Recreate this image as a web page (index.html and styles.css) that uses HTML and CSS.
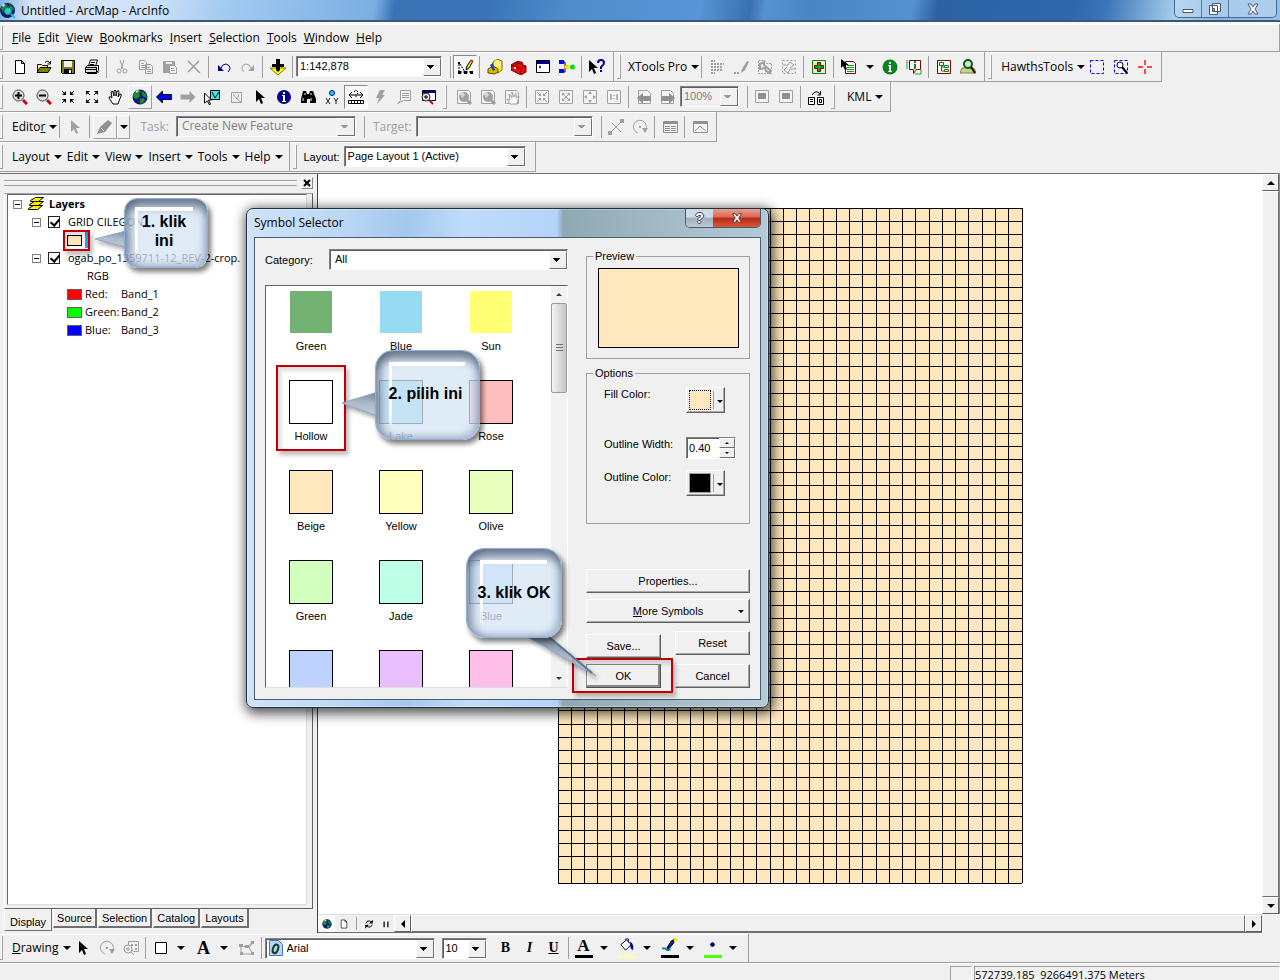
FILE: index.html
```html
<!DOCTYPE html>
<html lang="en">
<head>
<meta charset="utf-8">
<title>Untitled - ArcMap - ArcInfo</title>
<link rel="stylesheet" href="styles.css">
</head>
<body>
<svg class="defs" aria-hidden="true">
  <symbol id="globe" viewBox="0 0 16 16"><circle cx="8" cy="8" r="7.500" fill="#0a1a78"/><path d="M3 3l4-2 2 2-2 2 1 2-3 3-3-1-1-3zM10 2l4 3 1 4-3-1-2-2zM8 10l4-1 1 3-3 3-2-1z" fill="#1b8a2c"/><path d="M4 2l2-1 1 1-3 2z" fill="#d8ecd8"/></symbol>
  <symbol id="app" viewBox="0 0 16 16"><circle cx="7.500" cy="7.500" r="7.500" fill="#101c60"/><path d="M1 5l4-4 3 1-2 3-2 1-1 4zM9 1l4 3 1 4-4-3z" fill="#159030"/><path d="M2 2l2-1 1 1-2 2z" fill="#fff"/><circle cx="8" cy="8" r="3.500" fill="#28d8a0" stroke="#2a7ad8"/><path d="M11 11l4 4" stroke="#2ab8e8" stroke-width="2"/></symbol>
  <symbol id="new" viewBox="0 0 16 16"><path d="M3.500 1.500h6l3 3v10h-9z" fill="#fff" stroke="#000"/><path d="M9.500 1.500v3h3" fill="none" stroke="#000"/></symbol>
  <symbol id="open" viewBox="0 0 16 16"><path d="M1.500 13V5.500h4l1 1h5v3" fill="#ffffa0" stroke="#000"/><path d="M1 13.500l3-5h11l-3 5z" fill="#808000" stroke="#000"/><path d="M9 3.500q3-3 5 1M14.500 2v3h-3" fill="none" stroke="#000"/></symbol>
  <symbol id="save" viewBox="0 0 16 16"><path d="M1.500 1.500h13v13h-12l-1-1z" fill="#808000" stroke="#000"/><path d="M4 2h8v6H4z" fill="#f0f0f0"/><path d="M4 10h8v4H4z" fill="#000"/><path d="M9 11h2v3H9z" fill="#fff"/></symbol>
  <symbol id="print" viewBox="0 0 16 16"><path d="M4.500 7l2-6h7l-2 6" fill="#fff" stroke="#000"/><path d="M7 3.500h4M6 5.500h4" stroke="#000"/><path d="M1.500 8.500l2-2h11v5l-2 2h-11z" fill="#ddd" stroke="#000"/><path d="M1.500 8.500h11v5M2 10.500h10M3 14.500h10l2-2" fill="none" stroke="#000"/></symbol>
  <symbol id="cut" viewBox="0 0 16 16"><path d="M6 1l3 9M10 1L7 10" stroke="#a0a0a0" fill="none"/><circle cx="5" cy="12" r="2" fill="none" stroke="#a0a0a0"/><circle cx="11" cy="12" r="2" fill="none" stroke="#a0a0a0"/></symbol>
  <symbol id="copy" viewBox="0 0 16 16"><path d="M1.500 1.500h5l2 2v7h-7zM7.500 5.500h5l2 2v7h-7z" fill="#f0f0f0" stroke="#a0a0a0"/><path d="M3 4.500h3M3 6.500h4M3 8.500h4M9 8.500h3M9 10.500h4M9 12.500h4" stroke="#a0a0a0"/></symbol>
  <symbol id="paste" viewBox="0 0 16 16"><path d="M1 2h12v12H1z" fill="#a0a0a0"/><path d="M4 3h6v2H4zM7 7h8v8H7z" fill="#f0f0f0"/><path d="M7.500 6.500h5l2 2v6h-7zM9 9.500h3M9 11.500h4" fill="none" stroke="#a0a0a0"/></symbol>
  <symbol id="del" viewBox="0 0 16 16"><path d="M2 2l12 12M13 2L2 13" stroke="#a0a0a0" stroke-width="1.500"/></symbol>
  <symbol id="undo" viewBox="0 0 16 16"><path d="M5 9q1-4 5-4 4 1 4 4 0 2-2 4" fill="none" stroke="#000080"/><path d="M2 6v6h6z" fill="#000080"/></symbol>
  <symbol id="redo" viewBox="0 0 16 16"><path d="M11 9q-1-4-5-4-4 1-4 4 0 2 2 4" fill="none" stroke="#a0a0a0"/><path d="M14 6v6H8z" fill="#a0a0a0"/></symbol>
  <symbol id="adddata" viewBox="0 0 16 16"><path d="M0 9h16l-8 7z" fill="#ffff00" stroke="#807800"/><path d="M6 0h4v5h4v3h-4v3l-2 2-2-2V8H2V5h4z" fill="#000"/></symbol>
  <symbol id="edit" viewBox="0 0 16 16"><path d="M2 5v8h12M3 5l5 8" fill="none" stroke="#000" stroke-dasharray="2 1"/><path d="M1 12h3v3H1zM7 12h3v3H7zM13 12h3v3h-3zM1 3h2v2H1z" fill="#000"/><path d="M9 11l1-4 4-6 2 1-4 7z" fill="#ffe800" stroke="#000"/><path d="M13 1h3v3z" fill="#e02020"/></symbol>
  <symbol id="catalog" viewBox="0 0 16 16"><path d="M6 3l4-3 5 2v9l-4 3-5-3z" fill="#ffe94a" stroke="#807000"/><path d="M8 2h4M8 4h6M8 6h6" stroke="#fffbc0"/><path d="M1 10l5-3 5 3v3l-3 2-7-1z" fill="#d8b800" stroke="#605000"/><path d="M3 6l3-2 2 7-2 1z" fill="#2040b0"/></symbol>
  <symbol id="toolbox" viewBox="0 0 16 16"><path d="M0 6l5-3 10 4v6l-5 3L0 11z" fill="#e80c0c" stroke="#700"/><path d="M0 6l10 4v6M10 10l5-3" fill="none" stroke="#700"/><path d="M5 6q0-5 6-2v3" fill="none" stroke="#a00000" stroke-width="2"/><path d="M3 8h2v2H3z" fill="#fff"/></symbol>
  <symbol id="cmd" viewBox="0 0 16 16"><path d="M1.500 1.500h13v12h-13z" fill="#fff" stroke="#000"/><path d="M2 2h12v3H2z" fill="#000090"/><path d="M4 7l2 1-2 1" fill="none" stroke="#000"/></symbol>
  <symbol id="model" viewBox="0 0 16 16"><path d="M3 3h3v5h3M3 13h3V8M11 8h3" fill="none" stroke="#000"/><path d="M0 1h5v4H0zM0 10h5v4H0z" fill="#0000ff"/><path d="M5 8l3-3 3 3-3 3z" fill="#ffe000"/><circle cx="13.500" cy="8" r="2.500" fill="#00e020"/></symbol>
  <symbol id="help" viewBox="0 0 16 16"><path d="M0 1v12l3-3 2 5 2-1-2-5h4z" fill="#000"/><path d="M9 4q0-3 3-3t3 3q0 2-3 4v2" fill="none" stroke="#000090" stroke-width="2"/><path d="M11 11h2v2h-2z" fill="#000090"/></symbol>
  <symbol id="dots" viewBox="0 0 16 16"><path d="M2 2h4M2 5h13M2 8h11M2 11h11M2 14h4" stroke="#a0a0a0" stroke-width="2" stroke-dasharray="2 1"/></symbol>
  <symbol id="xpen" viewBox="0 0 16 16"><path d="M1 13h2v2H1zM4 13h2v2H4z" fill="#a0a0a0"/><path d="M8 14l1-4 5-8 2 1-4 8z" fill="#a0a0a0"/></symbol>
  <symbol id="xa" viewBox="0 0 16 16"><path d="M1.500 1.500h6l2 3h5v10h-13z" fill="none" stroke="#a0a0a0" stroke-dasharray="2 1"/><path d="M3 5l4-2v3l6 5v3l-4-2-1-3-5 1z" fill="none" stroke="#a0a0a0" stroke-width="2"/></symbol>
  <symbol id="xb" viewBox="0 0 16 16"><path d="M1.500 1.500h13v13h-13z" fill="none" stroke="#a0a0a0" stroke-dasharray="2 2"/><path d="M2 6h5l2-3 4 3-4 3M14 10H9l-2 4-4-3 3-3" fill="none" stroke="#a0a0a0"/></symbol>
  <symbol id="plus" viewBox="0 0 16 16"><path d="M1.500 1.500h13v13h-13z" fill="#dff3d0" stroke="#108010"/><path d="M6.500 3.500h3v3h3v3h-3v3h-3v-3h-3v-3h3z" fill="#18a018" stroke="#800000"/></symbol>
  <symbol id="report" viewBox="0 0 16 16"><path d="M4.500 2.500h8l2 2v10h-10z" fill="#fff" stroke="#800000"/><path d="M6 6.500h7M6 8.500h7M6 10.500h7M6 12.500h7" stroke="#10a010"/><path d="M0 0v9l2-2 2 4 2-1-2-4h4z" fill="#000"/></symbol>
  <symbol id="ginfo" viewBox="0 0 16 16"><circle cx="8" cy="8" r="7.500" fill="#0b8420"/><path d="M7 3h2v2H7zM6 6h3v6h1v1H6v-1h1V7H6z" fill="#fff"/></symbol>
  <symbol id="gnote" viewBox="0 0 16 16"><path d="M3.500 1.500h11v9h-4l-3 4v-4h-4z" fill="#fff" stroke="#800000"/><path d="M1 1v9M9 15h6v-4" fill="none" stroke="#10b010"/><path d="M8 2h2v2H8zM8 5h2v5H8z" fill="#0b8420"/></symbol>
  <symbol id="tree" viewBox="0 0 16 16"><path d="M1.500 1.500h13v13h-13z" fill="#f4fff0" stroke="#800000"/><path d="M3.500 3.500h4v3h-4zM8.500 6.500h4v2h-4zM8.500 10.500h4v2h-4z" fill="#fff" stroke="#107020"/><path d="M5.500 7v5h3M5.500 8h3" fill="none" stroke="#107020"/></symbol>
  <symbol id="gfind" viewBox="0 0 16 16"><path d="M0 14l2-5h12l2 5z" fill="#b8d890" stroke="#908030"/><circle cx="8" cy="5" r="4" fill="#d0e8d0" stroke="#0a6020" stroke-width="2"/><path d="M11 8l4 6" stroke="#300" stroke-width="2"/></symbol>
  <symbol id="dash" viewBox="0 0 16 16"><path d="M1.500 1.500h13v13h-13z" fill="none" stroke="#0000ff" stroke-dasharray="3 2"/></symbol>
  <symbol id="dashfind" viewBox="0 0 16 16"><path d="M1.500 1.500h13v13h-13z" fill="none" stroke="#0000ff" stroke-dasharray="3 2"/><circle cx="7" cy="6" r="3" fill="#fff" stroke="#000"/><path d="M9 8l5 6" stroke="#000" stroke-width="2"/></symbol>
  <symbol id="cross" viewBox="0 0 16 16"><path d="M8 1v5M8 10v5M1 8h5M10 8h5" stroke="#ff1010" stroke-width="1.500"/></symbol>
  <symbol id="zin" viewBox="0 0 16 16"><circle cx="6.500" cy="6.500" r="5.500" fill="#dcdcdc" stroke="#444"/><path d="M3 6.500h7M6.500 3v7" stroke="#000" stroke-width="2"/><path d="M11 11l4 4" stroke="#b01010" stroke-width="3"/></symbol>
  <symbol id="zout" viewBox="0 0 16 16"><circle cx="6.500" cy="6.500" r="5.500" fill="#dcdcdc" stroke="#444"/><path d="M3 6.500h7" stroke="#000" stroke-width="2"/><path d="M11 11l4 4" stroke="#b01010" stroke-width="3"/></symbol>
  <symbol id="fin" viewBox="0 0 16 16"><path d="M6 2v4H2zM10 2v4h4zM6 14v-4H2zM10 14v-4h4z"/><path d="M2 2l3 3M14 2l-3 3M2 14l3-3M14 14l-3-3" stroke="currentColor"/></symbol>
  <symbol id="fout" viewBox="0 0 16 16"><path d="M2 2h4L2 6zM14 2h-4l4 4zM2 14h4l-4-4zM14 14h-4l4-4z"/><path d="M3 3l3 3M13 3l-3 3M3 13l3-3M13 13l-3-3" stroke="currentColor"/></symbol>
  <symbol id="hand" viewBox="0 0 16 16"><path d="M5 15L1 9q0-2 2-1l1 1-1-6q1-2 2 0l1 4V2q1-2 2 0v5l1-5q2-1 2 1l-1 5 2-3q2 0 1 2l-2 5-1 3z" fill="#fff" stroke="currentColor"/></symbol>
  <symbol id="left" viewBox="0 0 16 16"><path d="M.5 8l6-6v3.500h9v5h-9V14z" fill="#0000f0" stroke="#000"/></symbol>
  <symbol id="right" viewBox="0 0 16 16"><path d="M15.500 8l-6-6v3.500h-9v5h9V14z" fill="#a0a0a0"/></symbol>
  <symbol id="selfeat" viewBox="0 0 16 16"><path d="M6.500 1.500h9v9h-9z" fill="#40e8e8" stroke="#000"/><path d="M8 3l3 6 4-6" fill="none" stroke="#000"/><path d="M.5 4v10l3-2 2 4 1-1-2-4h3z" fill="#fff" stroke="#000"/></symbol>
  <symbol id="clearsel" viewBox="0 0 16 16"><path d="M3.500 3.500h10v10h-10z" fill="none" stroke="#a0a0a0"/><path d="M5 5l4 5q3-3 1-5M9 10l4 3" fill="none" stroke="#a0a0a0"/></symbol>
  <symbol id="ptr" viewBox="0 0 16 16"><path d="M4 1v12l3-3 2 5 2-1-2-5h4z"/></symbol>
  <symbol id="info" viewBox="0 0 16 16"><circle cx="8" cy="8" r="7" fill="#000090"/><path d="M7 3h2v2H7zM6 6h3v6h1v1H6v-1h1V7H6z" fill="#fff"/></symbol>
  <symbol id="find" viewBox="0 0 16 16"><path d="M3 2h3l1 3h2l1-3h3l3 8v4h-6v-4H7v4H1v-4z"/><path d="M3 9v3M11 9v3M5 4v2M11 4v2" stroke="#fff"/></symbol>
  <symbol id="goxy" viewBox="0 0 16 16"><circle cx="8" cy="4" r="2.500" fill="#18d8e8" stroke="#0000c0"/><path d="M2 9l4 6M6 9l-4 6M10 9l2 3 2-3M12 12v3" fill="none" stroke="#222"/></symbol>
  <symbol id="measure" viewBox="0 0 16 16"><path d="M1 6h14M4 3L1 6l3 3M12 3l3 3-3 3" fill="none" stroke="#000"/><path d="M6 3q2-3 4 0 0 2-2 3v2" fill="none" stroke="#000" stroke-dasharray="2 1"/><path d="M.5 11.500h15v3H.5z" fill="#fff" stroke="#000"/><path d="M3.500 12v2M6.500 12v2M9.500 12v2M12.500 12v2" stroke="#000"/></symbol>
  <symbol id="bolt" viewBox="0 0 16 16"><path d="M8 1h5L10 6h3l-8 9 2-6H4z" fill="#a0a0a0"/></symbol>
  <symbol id="note" viewBox="0 0 16 16"><path d="M4.500 1.500h10v10h-7l-6 3 3-3z" fill="none" stroke="#a0a0a0"/><path d="M6 4.500h7M6 6.500h7M6 8.500h7" stroke="#a0a0a0"/></symbol>
  <symbol id="viewer" viewBox="0 0 16 16"><path d="M2.500 1.500h13v10h-13z" fill="#fff" stroke="#000"/><path d="M3 2h12v2H3z" fill="#000090"/><circle cx="6" cy="8" r="4" fill="#e4e4e4" stroke="#222"/><path d="M4 8h4M6 6v4" stroke="#000"/><path d="M9 11l4 4" stroke="#c01010" stroke-width="2"/></symbol>
  <symbol id="pgzoom" viewBox="0 0 16 16"><path d="M1.500 1.500h11l2 2v11h-13z" fill="#f4f4f4" stroke="#a0a0a0"/><circle cx="8" cy="8" r="5" fill="#a0a0a0"/><path d="M4 5l3-2 2 3-3 3z" fill="#d8d8d8"/><path d="M11 11l4 4" stroke="#a0a0a0" stroke-width="3"/></symbol>
  <symbol id="pghand" viewBox="0 0 16 16"><path d="M1.500 1.500h11l2 2v11h-13z" fill="#f4f4f4" stroke="#a0a0a0"/><path d="M6 15l-3-5 3 1-1-6 3 4V3l2 5 2-4v5l3-2-2 8z" fill="#fff" stroke="#a0a0a0"/></symbol>
  <symbol id="pgin" viewBox="0 0 16 16"><path d="M1.500 1.500h13v13h-13z" fill="#f4f4f4" stroke="#a0a0a0"/><path d="M7 4v3H4zM9 4v3h3zM7 12V9H4zM9 12V9h3z" fill="#a0a0a0"/><path d="M3 3l3 3M13 3l-3 3M3 13l3-3M13 13l-3-3" stroke="#a0a0a0"/></symbol>
  <symbol id="pgout" viewBox="0 0 16 16"><path d="M1.500 1.500h13v13h-13z" fill="#f4f4f4" stroke="#a0a0a0"/><path d="M4 4h3L4 7zM12 4H9l3 3zM4 12h3L4 9zM12 12H9l3-3z" fill="#a0a0a0"/><path d="M5 5l6 6M11 5l-6 6" stroke="#a0a0a0"/></symbol>
  <symbol id="pgfull" viewBox="0 0 16 16"><path d="M1.500 1.500h13v13h-13z" fill="#f4f4f4" stroke="#a0a0a0"/><path d="M8 2l2 3H6zM8 14l2-3H6zM2 8l3-2v4zM14 8l-3-2v4z" fill="#a0a0a0"/></symbol>
  <symbol id="pgone" viewBox="0 0 16 16"><path d="M1.500 1.500h13v13h-13z" fill="#f4f4f4" stroke="#a0a0a0"/><path d="M5 5v6M11 5v6M8 6v1M8 9v1" stroke="#a0a0a0" stroke-width="1.500"/></symbol>
  <symbol id="pgleft" viewBox="0 0 16 16"><path d="M2.500 1.500h9l3 3v10h-12z" fill="#f4f4f4" stroke="#a0a0a0"/><path d="M1 9l6-5v3h8v5H7v3z" fill="#909090"/></symbol>
  <symbol id="pgright" viewBox="0 0 16 16"><path d="M1.500 1.500h9l3 3v10h-12z" fill="#f4f4f4" stroke="#a0a0a0"/><path d="M15 9L9 4v3H1v5h8v3z" fill="#909090"/></symbol>
  <symbol id="pgimg" viewBox="0 0 16 16"><path d="M1.500 1.500h13v12h-13z" fill="#f4f4f4" stroke="#a0a0a0"/><path d="M4 4h8v6H4z" fill="#909090"/></symbol>
  <symbol id="swap" viewBox="0 0 16 16"><path d="M.5 8.500h6v7h-6zM9.500 8.500h6v7h-6z" fill="#fff" stroke="#000"/><path d="M2 10.500h3M2 12.500h3M11.500 10.500h2v3h-2z" fill="none" stroke="#000"/><path d="M4 6q4-6 8-1M12.500 2v4h-3" fill="none" stroke="#000"/></symbol>
  <symbol id="pencil" viewBox="0 0 16 16"><path d="M0 15l3-7 8-7 4 3-7 9z" fill="#909090"/><path d="M4 9l3 3" stroke="#f0f0f0"/></symbol>
  <symbol id="split" viewBox="0 0 16 16"><path d="M2 14L14 2M4 4l9 9" stroke="#a0a0a0"/><path d="M0 12h4v4H0zM12 0h4v4h-4z" fill="#a0a0a0"/></symbol>
  <symbol id="rotate" viewBox="0 0 16 16"><path d="M6 14A6.500 6.500 0 1 1 14 10" fill="none" stroke="#a0a0a0"/><path d="M10 9h6l-3 5z" fill="#a0a0a0"/><path d="M7 7h2v2H7z" fill="#a0a0a0"/></symbol>
  <symbol id="attr" viewBox="0 0 16 16"><path d="M1.500 2.500h14v11h-14z" fill="#f4f4f4" stroke="#909090"/><path d="M2 3h13v2H2z" fill="#909090"/><path d="M3 7.500h5M3 9.500h5M3 11.500h5M9 7.500h5M9 9.500h5M9 11.500h5" stroke="#909090"/></symbol>
  <symbol id="sketch" viewBox="0 0 16 16"><path d="M1.500 2.500h14v11h-14z" fill="#f4f4f4" stroke="#909090"/><path d="M2 3h13v2H2z" fill="#909090"/><path d="M3 12l5-5 6 5" fill="none" stroke="#909090"/></symbol>
  <symbol id="layers" viewBox="0 0 16 16"><path d="M.5 12.500l5-3h9l-5 4h-9zM1.500 8.500l5-3h9l-5 4h-9zM2.500 4.500l5-3h8l-5 4h-8z" fill="#ffef00" stroke="#000"/></symbol>
  <symbol id="zsel" viewBox="0 0 16 16"><path d="M5.500 1.500h10v10h-5l-2-2h-3z" fill="none" stroke="#a0a0a0"/><path d="M8 4h2v2H8zM12 4h2v2h-2zM12 8h2v2h-2z" fill="#a0a0a0"/><circle cx="5" cy="9" r="4" fill="#f0f0f0" stroke="#a0a0a0"/><path d="M3 9h4M5 7v4M8 12l3 3" stroke="#a0a0a0"/></symbol>
  <symbol id="rect" viewBox="0 0 16 16"><path d="M2.500 2.500h11v11h-11z" fill="#fff" stroke="#000"/></symbol>
  <symbol id="nodes" viewBox="0 0 16 16"><path d="M2 14V6l6 1 6-5-4 6 4 6z" fill="none" stroke="#a0a0a0"/><path d="M0 4h4v3H0zM6 5h4v3H6zM12 1h3v3h-3zM1 12h3v3H1zM12 12h3v3h-3z" fill="#a0a0a0"/></symbol>
  <symbol id="bucket" viewBox="0 0 16 16"><path d="M2 7l6-5 5 5-6 6z" fill="#fff" stroke="#000"/><path d="M7 2V1h3v4" fill="none" stroke="#000080"/><path d="M12 4q4 2 3 9-3-1-3-5z" fill="#000080"/></symbol>
  <symbol id="brush" viewBox="0 0 16 16"><path d="M5 11l5-8 4-2-2 5-5 6z" fill="#1020a0" stroke="#000"/><path d="M12 0h4v3l-3 1z" fill="#ffe800"/><path d="M0 11h3l3 2 3-1" fill="none" stroke="#108090" stroke-width="2"/></symbol>
  <symbol id="reload" viewBox="0 0 16 16"><path d="M3 7q1-4 5-4 3 0 4 3M13 9q-1 4-5 4-3 0-4-3" fill="none" stroke="#000" stroke-width="1.500"/><path d="M14 1v6H8zM2 15V9h6z" fill="#000"/></symbol>
  <symbol id="ofont" viewBox="0 0 16 16"><path d="M1.500.5h9l4 4v11h-13z" fill="#b8d4f8" stroke="#4878b8"/><ellipse cx="7.500" cy="9" rx="2.500" ry="4.500" transform="rotate(20 8 9)" fill="none" stroke="#084020" stroke-width="2"/></symbol>
</svg>

<header class="titlebar">
  <svg class="icon"><use href="#app"/></svg>
  <span class="title-text">Untitled - ArcMap - ArcInfo</span>
  <div class="winctl">
    <button aria-label="Minimize"><svg viewBox="0 0 16 16"><path d="M3 8.500h10v3H3z" fill="#fff" stroke="#4a5a70"/></svg></button>
    <button aria-label="Restore"><svg viewBox="0 0 16 16"><path d="M5.500 2.500h8v8h-8zM2.500 4.500h8v9h-8z" fill="#fff" stroke="#4a5a70"/><path d="M5.500 7.500h2v3h-2z" fill="#8ab" stroke="#4a5a70"/></svg></button>
    <button class="wide" aria-label="Close"><svg viewBox="0 0 16 16"><path d="M3 3h3l2 3 2-3h3l-3 5 3 5h-3l-2-3-2 3H3l3-5z" fill="#fff" stroke="#4a5a70"/></svg></button>
  </div>
</header>

<nav class="bar menubar">
  <div class="strip grow"><i class="grip"></i>
    <button class="menu"><u>F</u>ile</button><button class="menu"><u>E</u>dit</button><button class="menu"><u>V</u>iew</button><button class="menu"><u>B</u>ookmarks</button><button class="menu"><u>I</u>nsert</button><button class="menu"><u>S</u>election</button><button class="menu"><u>T</u>ools</button><button class="menu"><u>W</u>indow</button><button class="menu"><u>H</u>elp</button>
  </div>
</nav>

<div class="bar">
  <div class="strip"><i class="grip"></i>
    <button class="tb" aria-label="New"><svg><use href="#new"/></svg></button><button class="tb" aria-label="Open"><svg><use href="#open"/></svg></button><button class="tb" aria-label="Save"><svg><use href="#save"/></svg></button><button class="tb" aria-label="Print"><svg><use href="#print"/></svg></button>
    <i class="sep"></i>
    <button class="tb" aria-label="Cut"><svg><use href="#cut"/></svg></button><button class="tb" aria-label="Copy"><svg><use href="#copy"/></svg></button><button class="tb" aria-label="Paste"><svg><use href="#paste"/></svg></button><button class="tb" aria-label="Delete"><svg><use href="#del"/></svg></button>
    <i class="sep"></i>
    <button class="tb" aria-label="Undo"><svg><use href="#undo"/></svg></button><button class="tb" aria-label="Redo"><svg><use href="#redo"/></svg></button>
    <i class="sep"></i>
    <button class="tb" aria-label="Add Data"><svg><use href="#adddata"/></svg></button>
    <i class="sep"></i>
    <span class="combo w-scale"><select aria-label="Map Scale"><option>1:142,878</option></select></span>
    <i class="sep far"></i>
    <button class="tb down" aria-label="Editor Toolbar"><svg><use href="#edit"/></svg></button>
    <i class="sep"></i>
    <button class="tb" aria-label="ArcCatalog"><svg><use href="#catalog"/></svg></button><button class="tb" aria-label="ArcToolbox"><svg><use href="#toolbox"/></svg></button><button class="tb" aria-label="Command Line"><svg><use href="#cmd"/></svg></button><button class="tb" aria-label="ModelBuilder"><svg><use href="#model"/></svg></button>
    <i class="sep"></i>
    <button class="tb" aria-label="What's This?"><svg><use href="#help"/></svg></button>
  </div>
  <div class="strip x-tools"><i class="grip"></i>
    <button class="menu drop">XTools Pro</button>
    <i class="sep"></i>
    <button class="tb" aria-label="Points"><svg><use href="#dots"/></svg></button><button class="tb" aria-label="Sketch"><svg><use href="#xpen"/></svg></button><button class="tb" aria-label="Convert"><svg><use href="#xa"/></svg></button><button class="tb" aria-label="Shapes"><svg><use href="#xb"/></svg></button>
    <i class="sep"></i>
    <button class="tb" aria-label="Add"><svg><use href="#plus"/></svg></button>
    <i class="sep"></i>
    <button class="tb" aria-label="Report"><svg><use href="#report"/></svg></button><button class="caret-btn" aria-label="Report options"></button>
    <button class="tb" aria-label="Info"><svg><use href="#ginfo"/></svg></button><button class="tb" aria-label="Tips"><svg><use href="#gnote"/></svg></button>
    <i class="sep"></i>
    <button class="tb" aria-label="Hierarchy"><svg><use href="#tree"/></svg></button><button class="tb" aria-label="Find layer"><svg><use href="#gfind"/></svg></button>
  </div>
  <div class="strip"><i class="grip"></i>
    <button class="menu drop">HawthsTools</button>
    <button class="tb" aria-label="Select box"><svg><use href="#dash"/></svg></button><button class="tb" aria-label="Zoom box"><svg><use href="#dashfind"/></svg></button><button class="tb" aria-label="Center"><svg><use href="#cross"/></svg></button>
  </div>
</div>

<div class="bar">
  <div class="strip open"><i class="grip"></i>
    <button class="tb" aria-label="Zoom In"><svg><use href="#zin"/></svg></button><button class="tb" aria-label="Zoom Out"><svg><use href="#zout"/></svg></button><button class="tb" aria-label="Fixed Zoom In"><svg><use href="#fin"/></svg></button><button class="tb" aria-label="Fixed Zoom Out"><svg><use href="#fout"/></svg></button><button class="tb" aria-label="Pan"><svg><use href="#hand"/></svg></button><button class="tb raised" aria-label="Full Extent"><svg><use href="#globe"/></svg></button><button class="tb" aria-label="Back"><svg><use href="#left"/></svg></button><button class="tb" aria-label="Forward"><svg><use href="#right"/></svg></button><button class="tb" aria-label="Select Features"><svg><use href="#selfeat"/></svg></button><button class="tb" aria-label="Clear Selection"><svg><use href="#clearsel"/></svg></button><button class="tb" aria-label="Select Elements"><svg><use href="#ptr"/></svg></button><button class="tb" aria-label="Identify"><svg><use href="#info"/></svg></button><button class="tb" aria-label="Find"><svg><use href="#find"/></svg></button><button class="tb" aria-label="Go To XY"><svg><use href="#goxy"/></svg></button><button class="tb down" aria-label="Measure"><svg><use href="#measure"/></svg></button><button class="tb" aria-label="Hyperlink"><svg><use href="#bolt"/></svg></button><button class="tb" aria-label="HTML Popup"><svg><use href="#note"/></svg></button><button class="tb" aria-label="Viewer Window"><svg><use href="#viewer"/></svg></button>
  </div>
  <div class="strip open"><i class="grip"></i>
    <button class="tb" aria-label="Layout Zoom In"><svg><use href="#pgzoom"/></svg></button><button class="tb" aria-label="Layout Zoom Out"><svg><use href="#pgzoom"/></svg></button><button class="tb" aria-label="Layout Pan"><svg><use href="#pghand"/></svg></button>
    <i class="sep"></i>
    <button class="tb" aria-label="Layout Fixed Zoom In"><svg><use href="#pgin"/></svg></button><button class="tb" aria-label="Layout Fixed Zoom Out"><svg><use href="#pgout"/></svg></button><button class="tb" aria-label="Whole Page"><svg><use href="#pgfull"/></svg></button><button class="tb" aria-label="Zoom to 100%"><svg><use href="#pgone"/></svg></button>
    <i class="sep"></i>
    <button class="tb" aria-label="Previous Extent"><svg><use href="#pgleft"/></svg></button><button class="tb" aria-label="Next Extent"><svg><use href="#pgright"/></svg></button>
    <span class="combo off w-pct"><select aria-label="Page Zoom"><option>100%</option></select></span>
    <i class="sep far"></i>
    <button class="tb" aria-label="Draft Mode"><svg><use href="#pgimg"/></svg></button><button class="tb" aria-label="Focus Data Frame"><svg><use href="#pgimg"/></svg></button>
    <i class="sep"></i>
    <button class="tb" aria-label="Change Layout"><svg><use href="#swap"/></svg></button>
  </div>
  <div class="strip kml"><i class="grip"></i><button class="menu drop">KML</button></div>
</div>

<div class="bar">
  <div class="strip"><i class="grip"></i>
    <button class="menu drop">Edito<u>r</u></button>
    <i class="sep"></i>
    <button class="tb dim" aria-label="Edit Tool"><svg><use href="#ptr"/></svg></button>
    <i class="sep"></i>
    <button class="tb raised" aria-label="Sketch Tool"><svg><use href="#pencil"/></svg></button><button class="caret-btn raised slim" aria-label="Sketch tools"></button>
    <label class="lbl dim" for="task">Task:</label>
    <span class="combo off menu-font w-task"><select id="task"><option>Create New Feature</option></select></span>
    <i class="sep far"></i>
    <label class="lbl dim near" for="target">Target:</label>
    <span class="combo off w-target"><select id="target"><option></option></select></span>
    <i class="sep far"></i>
    <button class="tb" aria-label="Split Tool"><svg><use href="#split"/></svg></button><button class="tb" aria-label="Rotate Tool"><svg><use href="#rotate"/></svg></button>
    <i class="sep"></i>
    <button class="tb" aria-label="Attributes"><svg><use href="#attr"/></svg></button>
    <i class="sep"></i>
    <button class="tb" aria-label="Sketch Properties"><svg><use href="#sketch"/></svg></button>
  </div>
</div>

<div class="bar last">
  <div class="strip tight"><i class="grip"></i>
    <button class="menu drop">Layout</button><button class="menu drop">Edit</button><button class="menu drop">View</button><button class="menu drop">Insert</button><button class="menu drop">Tools</button><button class="menu drop">Help</button>
  </div>
  <div class="strip"><i class="grip"></i>
    <label class="lbl small" for="layout">Layout:</label>
    <span class="combo w-layout"><select id="layout"><option>Page Layout 1 (Active)</option></select></span>
  </div>
</div>

<main class="work">
  <aside class="toc">
    <div class="toc-head"><i class="lines"></i><button class="x" aria-label="Close panel"><svg viewBox="0 0 8 8"><path d="M1 1l6 6M7 1L1 7" stroke="#000" stroke-width="2"/></svg></button></div>
    <div class="toc-frame">
      <ul class="tree">
        <li><button class="exp" aria-label="Collapse"></button><svg class="icon"><use href="#layers"/></svg><b>Layers</b></li>
        <li class="l1"><button class="exp" aria-label="Collapse"></button><input type="checkbox" id="g1" checked><label for="g1">GRID CILEGON</label></li>
        <li class="l2"><i class="patch beige"></i><i class="sel"></i></li>
        <li class="l1"><button class="exp" aria-label="Collapse"></button><input type="checkbox" id="g2" checked><label for="g2">ogab_po_1359711-12_REV-2-crop.</label></li>
        <li class="l3">RGB</li>
        <li class="l2"><i class="patch red"></i><span class="ch">Red:</span>Band_1</li>
        <li class="l2"><i class="patch green"></i><span class="ch">Green:</span>Band_2</li>
        <li class="l2"><i class="patch blue"></i><span class="ch">Blue:</span>Band_3</li>
      </ul>
    </div>
    <div class="tabs"><button class="on">Display</button><button>Source</button><button>Selection</button><button>Catalog</button><button>Layouts</button></div>
  </aside>
  <section class="view">
    <div class="canvas">
      <svg class="mapgrid" viewBox="0 0 35 51" preserveAspectRatio="none" role="img" aria-label="Map grid">
        <path d="M0 0h35v51H0z" fill="#ffe8bd"/>
        <path fill="none" stroke="#000" stroke-width="1" vector-effect="non-scaling-stroke" d="M0 0v51M1 0v51M2 0v51M3 0v51M4 0v51M5 0v51M6 0v51M7 0v51M8 0v51M9 0v51M10 0v51M11 0v51M12 0v51M13 0v51M14 0v51M15 0v51M16 0v51M17 0v51M18 0v51M19 0v51M20 0v51M21 0v51M22 0v51M23 0v51M24 0v51M25 0v51M26 0v51M27 0v51M28 0v51M29 0v51M30 0v51M31 0v51M32 0v51M33 0v51M34 0v51M35 0v51M0 0h35M0 1h35M0 2h35M0 3h35M0 4h35M0 5h35M0 6h35M0 7h35M0 8h35M0 9h35M0 10h35M0 11h35M0 12h35M0 13h35M0 14h35M0 15h35M0 16h35M0 17h35M0 18h35M0 19h35M0 20h35M0 21h35M0 22h35M0 23h35M0 24h35M0 25h35M0 26h35M0 27h35M0 28h35M0 29h35M0 30h35M0 31h35M0 32h35M0 33h35M0 34h35M0 35h35M0 36h35M0 37h35M0 38h35M0 39h35M0 40h35M0 41h35M0 42h35M0 43h35M0 44h35M0 45h35M0 46h35M0 47h35M0 48h35M0 49h35M0 50h35M0 51h35"/>
      </svg>
    </div>
    <div class="vscroll"><button class="sb up" aria-label="Scroll up"></button><div class="track"></div><button class="sb dn" aria-label="Scroll down"></button></div>
    <div class="hscroll">
      <button class="mini pressed" aria-label="Data View"><svg><use href="#globe"/></svg></button><button class="mini" aria-label="Layout View"><svg><use href="#new"/></svg></button><i class="sep far"></i><button class="mini" aria-label="Refresh"><svg><use href="#reload"/></svg></button><button class="mini" aria-label="Pause"><svg viewBox="0 0 16 16"><path d="M5 4v9M11 4v9" stroke="#000" stroke-width="2"/></svg></button>
      <button class="sb lt" aria-label="Scroll left"></button><div class="track"></div><button class="sb rt" aria-label="Scroll right"></button>
    </div>
  </section>
</main>

<div class="bar draw">
  <div class="strip"><i class="grip"></i>
    <button class="menu drop"><u>D</u>rawing</button>
    <button class="tb" aria-label="Select"><svg><use href="#ptr"/></svg></button><button class="tb" aria-label="Rotate"><svg><use href="#rotate"/></svg></button><button class="tb" aria-label="Zoom to Selected"><svg><use href="#zsel"/></svg></button>
    <i class="sep"></i>
    <button class="tb" aria-label="Rectangle"><svg><use href="#rect"/></svg></button><button class="caret-btn" aria-label="Shapes"></button>
    <button class="tb letter big" aria-label="Text">A</button><button class="caret-btn" aria-label="Text tools"></button>
    <button class="tb" aria-label="Edit Vertices"><svg><use href="#nodes"/></svg></button>
    <i class="sep"></i>
    <span class="combo font w-font"><svg class="icon"><use href="#ofont"/></svg><select aria-label="Font"><option>Arial</option></select></span>
    <span class="combo w-size"><select aria-label="Font Size"><option>10</option></select></span>
    <button class="tb letter">B</button><button class="tb letter it">I</button><button class="tb letter"><u>U</u></button>
    <i class="sep"></i>
    <button class="tb color letter" aria-label="Font Color">A<i class="c-black"></i></button><button class="caret-btn" aria-label="Font colors"></button>
    <button class="tb color" aria-label="Fill Color"><svg><use href="#bucket"/></svg><i class="c-yellow"></i></button><button class="caret-btn" aria-label="Fill colors"></button>
    <button class="tb color" aria-label="Line Color"><svg><use href="#brush"/></svg><i class="c-black"></i></button><button class="caret-btn" aria-label="Line colors"></button>
    <button class="tb color" aria-label="Marker Color"><svg viewBox="0 0 16 16"><circle cx="8" cy="7" r="2" stroke="#0000d0"/></svg><i class="c-green"></i></button><button class="caret-btn" aria-label="Marker colors"></button>
  </div>
</div>

<footer class="status"><span class="cell"></span><span class="cell coords">572739.185&nbsp; 9266491.375 Meters</span></footer>

<div class="dialog" role="dialog" aria-labelledby="dlg-title">
  <div class="dlg-head"><h1 id="dlg-title">Symbol Selector</h1>
    <div class="dlg-ctl"><button class="q" aria-label="Help">?</button><button class="close" aria-label="Close"><svg viewBox="0 0 16 16"><path d="M3 3h3l2 3 2-3h3l-3 5 3 5h-3l-2-3-2 3H3l3-5z" fill="#fff" stroke="#5a3030"/></svg></button></div>
  </div>
  <div class="dlg-body">
    <div class="pick">
      <div class="cat"><label for="cat">Category:</label><span class="combo w-cat"><select id="cat"><option>All</option></select></span></div>
      <div class="list">
        <div class="swatches">
          <figure class="flat"><i class="s-green"></i><figcaption>Green</figcaption></figure>
          <figure class="flat"><i class="s-blue"></i><figcaption>Blue</figcaption></figure>
          <figure class="flat"><i class="s-sun"></i><figcaption>Sun</figcaption></figure>
          <figure><i class="s-hollow"></i><figcaption>Hollow</figcaption></figure>
          <figure><i class="s-lake"></i><figcaption>Lake</figcaption></figure>
          <figure><i class="s-rose"></i><figcaption>Rose</figcaption></figure>
          <figure><i class="beige"></i><figcaption>Beige</figcaption></figure>
          <figure><i class="s-yellow"></i><figcaption>Yellow</figcaption></figure>
          <figure><i class="s-olive"></i><figcaption>Olive</figcaption></figure>
          <figure><i class="s-lime"></i><figcaption>Green</figcaption></figure>
          <figure><i class="s-jade"></i><figcaption>Jade</figcaption></figure>
          <figure><i class="s-sky"></i><figcaption>Blue</figcaption></figure>
          <figure><i class="s-peri"></i></figure>
          <figure><i class="s-lilac"></i></figure>
          <figure><i class="s-pink"></i></figure>
        </div>
        <div class="aero"><button class="au" aria-label="Scroll up"></button><div class="thumb"></div><button class="ad" aria-label="Scroll down"></button></div>
      </div>
    </div>
    <div class="side">
      <fieldset><legend>Preview</legend><div class="preview beige"></div></fieldset>
      <fieldset class="opts"><legend>Options</legend>
        <div class="row"><label for="fc">Fill Color:</label><button id="fc" class="cbtn"><i class="beige dotted"></i></button></div>
        <div class="row mid"><label for="ow">Outline Width:</label><span class="spin"><input id="ow" value="0.40"><button aria-label="Increase"></button><button class="dec" aria-label="Decrease"></button></span></div>
        <div class="row"><label for="oc">Outline Color:</label><button id="oc" class="cbtn"><i class="c-black"></i></button></div>
      </fieldset>
      <div class="actions">
        <button class="btn full">Properties...</button>
        <button class="btn full more"><u>M</u>ore Symbols</button>
        <div class="col"><button class="btn">Save...</button><button class="btn default">OK</button></div>
        <div class="col right"><button class="btn">Reset</button><button class="btn">Cancel</button></div>
      </div>
    </div>
  </div>
</div>

<div class="mark m1"></div><div class="mark m2"></div><div class="mark m3"></div>

<svg class="tails" width="700" height="720" aria-hidden="true">
  <defs><linearGradient id="tg" x1="0" y1="0" x2="0" y2="1"><stop offset="0" stop-color="#66798f"/><stop offset=".45" stop-color="#a9b9cc"/><stop offset="1" stop-color="#c8d6e8"/></linearGradient></defs>
  <path d="M95 239L126 231V247z" fill="url(#tg)" stroke="#8ea8c8" fill-opacity=".85"/>
  <path d="M342 403L378 392V416z" fill="url(#tg)" stroke="#8ea8c8" fill-opacity=".9"/>
  <path d="M528 637H550L596 676z" fill="url(#tg)" stroke="#8ea8c8" fill-opacity=".8"/>
  <path d="M550 638L592 673" stroke="#5d7594" stroke-width="2"/>
</svg>
<div class="callout c1"><p>1. klik<br>ini</p></div>
<div class="callout c2"><p>2. pilih ini</p></div>
<div class="callout c3"><p>3. klik OK</p></div>
</body>
</html>
```
FILE: styles.css
```css
* { box-sizing: border-box; }
html, body { height: 100%; }
body {
  margin: 0; display: flex; flex-direction: column; overflow: hidden; position: relative;
  background: #f0f0f0; color: #000; font: 12px/16px "Open Sans", "Noto Sans", sans-serif;
}
button, select, input { font: inherit; color: inherit; margin: 0; padding: 0; border: 0; border-radius: 0; background: none; }
i { font-style: normal; flex: none; }
svg { display: block; }
.defs { position: absolute; width: 0; height: 0; }
.icon { width: 16px; height: 16px; flex: none; }

/* title bar */
.titlebar {
  flex: none; height: 24px; display: flex; align-items: center; gap: 5px;
  border-bottom: 2px solid #f8f8f8; box-shadow: inset 0 -2px #3c5878;
  background: linear-gradient(100deg, #7fb0e6 0, #d4e4f4 30px, #cfe2f6 150px, #a4cbf0 220px, #7aaee2 370px, #3a72b4 390px, #3a74b6 480px, #4f8ccc 560px, #5895d6 690px, #3a70b0 740px, #5691d0 755px, #4a86c6 800px, #5590d0 900px, #2c62a4 925px, #2f68ac 1060px, #3b74b8 1090px, #a8cfec 1160px, #85b2e0 1200px, #9cc4ea 1280px);
}
.title-text { flex: 1; }
.winctl { display: flex; align-self: flex-start; margin-right: 3px; border: 1px solid #486890; border-top: 0; border-radius: 0 0 5px 5px; height: 18px; background: rgba(190, 216, 242, .6); }
.winctl button { width: 27px; height: 17px; display: grid; place-items: center; border-right: 1px solid #5878a0; }
.winctl button.wide { width: 47px; border: 0; }
.winctl svg { width: 16px; height: 16px; }

/* toolbars */
.bar { flex: none; display: flex; height: 30px; }
.menubar { height: 28px; }
.strip { display: flex; align-items: center; border-bottom: 1px solid #a0a0a0; border-right: 1px solid #a0a0a0; box-shadow: inset 0 1px #fff; padding-right: 4px; }
.strip.open { border-right: 0; padding-right: 0; }
.grow { flex: 1; }
.grip { width: 4px; height: 24px; border-right: 1px solid #a0a0a0; border-bottom: 1px solid #a0a0a0; margin-right: 5px; box-shadow: inset -1px 0 #fff; }
.strip > .grip { margin-left: -1px; }
.strip + .strip .grip { margin-left: 3px; }
.sep { width: 1px; height: 22px; background: #a0a0a0; margin: 0 3px 0 2px; }
.sep.far { margin: 0 2px 0 8px; }
.tb { width: 24px; height: 24px; display: grid; place-items: center; flex: none; color: #000; }
.tb svg { width: 16px; height: 16px; }
.down { border: 1px solid; border-color: #888 #fff #fff #888; background: #f8f8f8; }
.raised { border: 1px solid; border-color: #fff #a0a0a0 #a0a0a0 #fff; }
.dim { color: #a0a0a0; }
.tb.dim svg { fill: #a0a0a0; }
.menu { padding: 0 4px; white-space: nowrap; }
.menubar .menu { padding-right: 3px; }
.drop, .more { display: flex; align-items: center; }
.menu.drop { padding-right: 0; }
.x-tools .menu.drop { padding-left: 2px; }
.drop::after, .caret-btn::after { content: ""; border: 4px solid transparent; border-top-color: #000; border-bottom: 0; }
.drop::after { margin-left: 4px; }
.kml { padding-right: 7px; }
.kml .menu.drop { padding-left: 7px; }
.tight .menu.drop { padding-left: 3px; }
.tight .drop::after { margin-right: 2px; }
.tight .grip { margin-right: 6px; }
.caret-btn { width: 17px; height: 24px; display: grid; place-items: center; flex: none; }
.slim { width: 13px; }
.lbl { padding: 0 7px 0 10px; }
.lbl.near { padding: 0 4px 0 6px; }
.lbl.small { padding: 0 4px 0 2px; font: 11px/14px "Liberation Sans", Arial, sans-serif; }

.combo {
  display: flex; position: relative; height: 21px; background: #fff; flex: none;
  border: 1px solid; border-color: #808080 #fff #fff #808080; box-shadow: inset 1px 1px #606060;
  font: 11px/14px "Liberation Sans", Arial, sans-serif;
}
.combo select { appearance: none; flex: 1; min-width: 0; padding: 0 20px 1px 3px; outline: 0; }
.combo::after {
  content: ""; position: absolute; right: 0; top: 1px; bottom: 0; width: 16px; pointer-events: none;
  border: 1px solid; border-color: #fff #707070 #707070 #fff;
  background: linear-gradient(#000, #000) 3px 6px / 7px 1px no-repeat, linear-gradient(#000, #000) 4px 7px / 5px 1px no-repeat, linear-gradient(#000, #000) 5px 8px / 3px 1px no-repeat, linear-gradient(#000, #000) 6px 9px / 1px 1px no-repeat, #f0f0f0;
}
.combo.off { background: #f0f0f0; color: #808080; }
.combo.off::after { background: linear-gradient(#999, #999) 3px 6px / 7px 1px no-repeat, linear-gradient(#999, #999) 4px 7px / 5px 1px no-repeat, linear-gradient(#999, #999) 5px 8px / 3px 1px no-repeat, #f0f0f0; }
.menu-font { font: 12px/16px "Open Sans", "Noto Sans", sans-serif; }
.menu-font select { padding-left: 5px; }
.w-scale { width: 146px; }
.w-pct { width: 59px; }
.w-task { width: 180px; }
.w-target { width: 177px; }
.w-layout { width: 182px; margin-right: 5px; }
.w-font { width: 170px; }
.w-size { width: 45px; margin: 0 7px; }
.w-cat { flex: 1; }
.w-cat select { padding-left: 5px; }
.font { align-items: center; padding-left: 2px; }
.font select { height: 19px; }

/* work area */
.work { flex: 1; display: flex; min-height: 0; margin-top: 1px; border-top: 1px solid #707070; }
.toc { width: 317px; flex: none; display: flex; flex-direction: column; padding: 2px 4px 2px; }
.toc-head { display: flex; justify-content: space-between; align-items: center; gap: 4px; height: 13px; }
.lines { flex: 1; height: 6px; border: 1px solid #a0a0a0; border-width: 1px 0; box-shadow: inset 0 1px #fff; }
.x { width: 12px; height: 12px; display: grid; place-items: center; border: 1px solid; border-color: #fff #888 #888 #fff; }
.x svg { width: 8px; height: 8px; }
.toc-frame { flex: 1; min-height: 0; margin-top: 4px; padding: 0 5px 3px 2px; border: 1px solid; border-color: #a0a0a0 #606060 #606060 #fff; display: flex; }
.tree { flex: 1; min-width: 0; overflow: hidden; margin: 0; padding: 0; list-style: none; background: #fff; border: 1px solid #696969; border-right-color: #ddd; border-bottom-color: #ddd; font-size: 11px; }
.tree li { height: 18px; display: flex; align-items: center; padding-left: 5px; white-space: nowrap; }
.exp { width: 9px; height: 9px; border: 1px solid #808080; background: linear-gradient(#000, #000) center / 5px 1px no-repeat; flex: none; margin-right: 6px; }
.tree b { margin-left: 5px; }
.tree .l1 { padding-left: 24px; }
.tree .l2 { padding-left: 59px; }
.tree .l3 { padding-left: 79px; }
.tree input { appearance: none; width: 12px; height: 12px; border: 1px solid #222; background: #fff; margin: 0 8px 0 1px; flex: none; position: relative; }
.tree input:checked::after { content: ""; position: absolute; left: 3px; top: 0; width: 4px; height: 7px; border: solid #000; border-width: 0 2px 2px 0; transform: rotate(40deg); }
.patch { width: 15px; height: 11px; border: 1px solid #606060; margin-right: 3px; }
.patch.beige { border-color: #000; }
.sel { width: 3px; height: 16px; background: #3399ff; }
.ch { width: 36px; }
.beige { background: #ffe8bd; }
.red { background: #f00; }
.green { background: #0f0; }
.blue { background: #00f; }
.tabs { display: flex; height: 22px; align-items: flex-start; font: 11px/14px "Liberation Sans", Arial, sans-serif; }
.tabs button { height: 19px; padding: 2px 3px; margin-right: 1px; border: solid #707070; border-width: 0 2px 2px 1px; border-left-color: #fff; }
.tabs .on { height: 22px; padding: 5px 5px 0; border-width: 0 1px 1px; }

.view { flex: 1; min-width: 0; display: grid; grid-template-columns: 1fr 18px; grid-template-rows: 1fr 19px; border-left: 1px solid #404040; }
.canvas { background: #fff; overflow: hidden; padding: 34px 0 0 240px; }
.mapgrid { width: 464px; height: 675px; overflow: visible; shape-rendering: crispEdges; }
.vscroll { display: flex; flex-direction: column; border-right: 1px solid #888; }
.hscroll { grid-column: 1; display: flex; align-items: center; border-bottom: 1px solid #707070; border-top: 1px solid #ddd; }
.track { flex: 1; align-self: stretch; border: 1px solid; border-color: #fff #707070 #707070 #fff; }
.sb { width: 17px; height: 17px; flex: none; display: grid; place-items: center; border: 1px solid; border-color: #fff #606060 #606060 #fff; }
.sb::after, .aero button::after { content: ""; border: 4px solid transparent; }
.aero button::after { border-width: 3px; opacity: .75; }
.sb.up::after, .aero .au::after { border-top: 0; border-bottom-color: #000; }
.sb.dn::after, .aero .ad::after { border-bottom: 0; border-top-color: #000; }
.lt::after { border-left: 0; border-right-color: #000; }
.rt::after { border-right: 0; border-left-color: #000; }
.mini { width: 17px; height: 17px; display: grid; place-items: center; }
.mini svg { width: 10px; height: 10px; }
.mini.pressed { background: #fafafa; }
.hscroll .sep { height: 13px; margin: 0 3px 0 4px; }

/* drawing bar and status */
.draw { margin-top: 1px; height: 29px; border-bottom: 1px solid #a0a0a0; }
.draw .strip { border-bottom: 0; }
.letter { font: bold 14px/16px "Liberation Serif", serif; }
.big { font-size: 18px; }
.it { font-style: italic; }
.color { grid-template-rows: 14px 3px; align-content: center; row-gap: 2px; }
.color svg { width: 15px; height: 15px; }
.color i { width: 18px; height: 3px; }
.color.letter { font-size: 17px; }
.draw .caret-btn { margin-right: 2px; }
.c-black { background: #000; }
.c-yellow { background: #ffffa8; }
.c-green { background: #4cff00; }
.status { flex: none; height: 17px; display: grid; grid-template-columns: 22px 306px; gap: 2px; justify-content: end; padding-top: 3px; box-shadow: inset 0 1px #fff; font-size: 11px; }
.cell { height: 18px; border: 1px solid #a0a0a0; border-right-color: #fff; white-space: nowrap; }

/* symbol selector */
.dialog {
  position: absolute; left: 246px; top: 208px; width: 523px; height: 500px; display: flex; flex-direction: column; padding: 0 7px 7px;
  border: 1px solid #20303c; border-radius: 7px; box-shadow: 0 0 0 1px rgba(255,255,255,.3) inset, 2px 3px 12px 3px rgba(0,0,0,.65);
  background: linear-gradient(90deg, #cfe3f8 0, #bcd8f6 90px, #a4c8ec 160px, #c0dcfa 220px, #b3d3f8 310px, #8ea9b4 316px, #a4bac6 420px, #b4cad6 100%);
  font: 11px/14px "Liberation Sans", Arial, sans-serif;
}
.dlg-head { flex: none; height: 28px; display: flex; justify-content: space-between; }
.dlg-head h1 { margin: 0; font: 12px/28px "Open Sans", "Noto Sans", sans-serif; }
.dlg-ctl { display: flex; height: 19px; border: 1px solid #4a5a68; border-top: 0; border-radius: 0 0 5px 5px; overflow: hidden; }
.q { width: 27px; background: linear-gradient(#d0dae2 45%, #9eb0bc 50%, #bccad2); font-weight: bold; font-size: 14px; color: #fff; text-shadow: 1px 0 #345, -1px 0 #345, 0 1px #345, 0 -1px #345; }
.close { width: 47px; display: grid; place-items: center; background: linear-gradient(#e8a090 0, #d86850 45%, #b82818 50%, #d85838); }
.close svg { width: 14px; height: 14px; }
.dlg-body { flex: 1; min-height: 0; display: flex; gap: 18px; padding: 11px 10px 11px; background: #f0f0f0; border: 1px solid #4c5c68; }
.pick { flex: 1; display: flex; flex-direction: column; gap: 15px; min-height: 0; }
.cat { display: flex; align-items: center; }
.cat label { width: 64px; }
.list { flex: 1; min-height: 0; display: flex; border: 1px solid; border-color: #606060 #fff #ddd #606060; background: #fff; }
.swatches { flex: 1; display: grid; grid-template-columns: repeat(3, 90px); grid-auto-rows: 90px; overflow: hidden; min-height: 0; }
figure { margin: 0; padding-top: 4px; display: flex; flex-direction: column; align-items: center; gap: 5px; }
figure i { width: 44px; height: 44px; border: 1px solid #000; }
.flat i { border-color: transparent; background-clip: padding-box; }
.s-green { background-color: #74b274; }
.s-blue, .s-lake { background-color: #97dbf2; }
.s-sun { background-color: #ffff73; }
.s-hollow { background: #fff; }
.s-rose { background: #ffbebe; }
.s-yellow { background: #ffffbe; }
.s-olive { background: #e9ffbe; }
.s-lime { background: #d3ffbe; }
.s-jade { background: #beffe8; }
.s-sky { background: #bee8ff; }
.s-peri { background: #bed2ff; }
.s-lilac { background: #e8beff; }
.s-pink { background: #ffbee8; }
.aero { width: 16px; display: flex; flex-direction: column; background: #f2f2f2; }
.aero button { height: 17px; display: grid; place-items: center; }
.thumb { height: 90px; margin-bottom: auto; border: 1px solid #9a9a9a; border-radius: 2px; background: repeating-linear-gradient(#707070 0 1px, transparent 1px 3px) center / 7px 9px no-repeat, linear-gradient(90deg, #f4f4f4, #d8d8d8 60%, #c4c4c4); }
.side { width: 164px; display: flex; flex-direction: column; gap: 7px; }
fieldset { margin: 0; padding: 5px 10px 10px 11px; border: 1px solid #a0a0a0; min-width: 0; }
legend { margin-left: -5px; padding: 0 2px; line-height: 14px; }
.preview { height: 80px; border: 1px solid #000; }
.opts { padding: 7px 10px 27px 17px; }
.opts legend { margin-left: -11px; }
.row { display: flex; align-items: flex-start; }
.row label { width: 82px; flex: none; white-space: nowrap; }
.mid { margin: 24px 0 11px; }
.cbtn { width: 39px; height: 26px; display: flex; align-items: center; border: 1px solid; border-color: #fff #606060 #606060 #fff; box-shadow: inset -1px -1px #a8a8a8; padding-left: 2px; }
.cbtn i { width: 22px; height: 20px; border: 1px solid #a0a0a0; }
.cbtn .dotted { border: 1px dotted #000; }
.cbtn::before { content: ""; order: 1; width: 1px; height: 18px; margin-left: 2px; background: #a0a0a0; }
.cbtn::after { content: ""; order: 2; border: 3px solid transparent; border-top-color: #000; border-bottom: 0; margin: 2px 0 0 3px; }
.spin { width: 50px; height: 22px; display: grid; grid-template-columns: 1fr 16px; grid-template-rows: 10px 10px; border: 1px solid; border-color: #808080 #fff #fff #808080; background: #fff; box-shadow: inset 1px 1px #606060; }
.spin input { grid-row: span 2; width: 100%; padding-left: 2px; outline: 0; }
.spin button { display: grid; place-items: center; background: #f0f0f0; border: 1px solid; border-color: #fff #707070 #707070 #fff; }
.spin button::after { content: ""; border: 2px solid transparent; border-bottom-color: #000; border-top: 0; }
.spin .dec::after { border-bottom: 0; border-top: 2px solid #000; }
.actions { margin-top: 38px; display: grid; grid-template-columns: 75px 75px; justify-content: space-between; row-gap: 6px; }
.full { grid-column: span 2; }
.btn { height: 24px; border: 1px solid; border-color: #fff #606060 #606060 #fff; box-shadow: inset -1px -1px #a8a8a8; }
.more { justify-content: center; position: relative; white-space: pre; }
.more::after { content: ""; position: absolute; right: 5px; border: 3px solid transparent; border-top-color: #000; border-bottom: 0; }
.col { display: flex; flex-direction: column; gap: 6px; padding-top: 5px; }
.col.right { gap: 9px; padding-top: 2px; }
.default { border-color: #888 #505050 #505050 #888; box-shadow: inset -2px -2px #888, inset 1px 1px #fff; }

/* annotations */
.mark { position: absolute; border: 2px solid #c00000; box-shadow: 3px 4px 4px rgba(0,0,0,.25), inset 3px 4px 4px rgba(0,0,0,.14); }
.m1 { left: 63px; top: 230px; width: 27px; height: 21px; }
.m2 { left: 276px; top: 365px; width: 70px; height: 86px; }
.m3 { left: 572px; top: 658px; width: 101px; height: 35px; }
.tails { position: absolute; left: 0; top: 0; pointer-events: none; filter: drop-shadow(2px 3px 2px rgba(0,0,0,.4)); }
.callout {
  position: absolute; border-radius: 18px; border: 1px solid #8fb0d6; display: grid; justify-items: center;
  font: bold 16px/19px "Liberation Sans", Arial, sans-serif; text-align: center; white-space: nowrap;
  background: rgba(214, 228, 246, .75);
  box-shadow: 3px 4px 5px rgba(0,0,0,.5), inset 0 11px 9px -3px rgba(70,86,108,.7), inset 9px 0 9px -3px rgba(96,114,140,.6), inset -5px -4px 6px -1px rgba(130,154,186,.5);
}
.callout::before { content: ""; position: absolute; left: 13px; right: 14px; top: 11px; bottom: 14px; border: solid #fff; border-width: 4px 0 0 3px; mask: linear-gradient(150deg, #000 45%, transparent 75%); }
.callout p { margin: 0; position: relative; }
.c1 { left: 124px; top: 198px; width: 84px; height: 70px; padding: 13px 4px 0 0; border-radius: 13px; }
.c1::before { left: 10px; top: 8px; }
.c2 { left: 375px; top: 350px; width: 105px; height: 90px; padding: 33px 4px 0 0; }
.c3 { left: 466px; top: 548px; width: 96px; height: 90px; padding-top: 34px; }
```
